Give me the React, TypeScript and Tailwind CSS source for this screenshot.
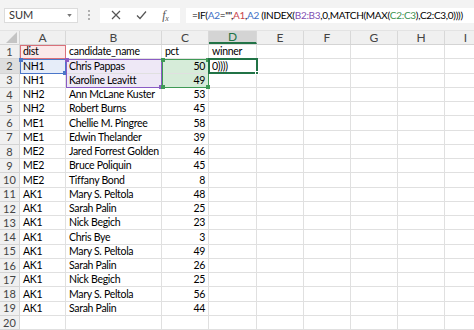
import React from "react";

const COLS = [
  { key: "A", w: "w-[46px]" },
  { key: "B", w: "w-[96px]" },
  { key: "C", w: "w-[47px]" },
  { key: "D", w: "w-[48px]" },
  { key: "E", w: "w-[47px]" },
  { key: "F", w: "w-[47px]" },
  { key: "G", w: "w-[47px]" },
  { key: "H", w: "w-[47px]" },
  { key: "I", w: "w-[42px]" },
];

const ROWS: [string, string, string, string][] = [
  ["dist", "candidate_name", "pct", "winner"],
  ["NH1", "Chris Pappas", "50", "0))))"],
  ["NH1", "Karoline Leavitt", "49", ""],
  ["NH2", "Ann McLane Kuster", "53", ""],
  ["NH2", "Robert Burns", "45", ""],
  ["ME1", "Chellie M. Pingree", "58", ""],
  ["ME1", "Edwin Thelander", "39", ""],
  ["ME2", "Jared Forrest Golden", "46", ""],
  ["ME2", "Bruce Poliquin", "45", ""],
  ["ME2", "Tiffany Bond", "8", ""],
  ["AK1", "Mary S. Peltola", "48", ""],
  ["AK1", "Sarah Palin", "25", ""],
  ["AK1", "Nick Begich", "23", ""],
  ["AK1", "Chris Bye", "3", ""],
  ["AK1", "Mary S. Peltola", "49", ""],
  ["AK1", "Sarah Palin", "26", ""],
  ["AK1", "Nick Begich", "25", ""],
  ["AK1", "Mary S. Peltola", "56", ""],
  ["AK1", "Sarah Palin", "44", ""],
  ["", "", "", ""],
];

// light fills for the cells referenced by the formula being edited
function cellBg(row: number, col: string) {
  if (row === 1 && col === "A") return "bg-[#fbe9ea]";
  if (row === 2 && col === "A") return "bg-[#e6edf9]";
  if ((row === 2 || row === 3) && col === "B") return "bg-[#eee8f6]";
  if ((row === 2 || row === 3) && col === "C") return "bg-[#d6ecd9]";
  return "bg-white";
}

function Handle({ cls }: { cls: string }) {
  return <div className={`absolute w-[4px] h-[4px] ${cls}`} />;
}

export default function App() {
  return (
    <div className="w-[474px] h-[330px] overflow-hidden bg-[#e6e6e6] text-[10.5px] tracking-[-0.3px] text-black" style={{ fontFamily: "Lato, 'Liberation Sans', sans-serif" }}>
      {/* formula bar */}
      <div className="h-[31px] bg-[#f3f3f3] flex items-center pl-[4px] border-b border-[#e3e3e3]">
        <div className="w-[74px] shrink-0 h-[15px] bg-white border border-[#dcdcdc] flex items-center justify-between pl-[4px] pr-[5px] text-[11px] tracking-normal text-[#333]">
          <span>SUM</span>
          <svg width="5" height="3" viewBox="0 0 6 4"><path d="M0 0h6L3 4z" fill="#777" /></svg>
        </div>
        <div className="w-[22px] shrink-0 flex flex-col items-center gap-[2px]">
          <span className="w-[2px] h-[2px] bg-[#b0b0b0]" />
          <span className="w-[2px] h-[2px] bg-[#b0b0b0]" />
          <span className="w-[2px] h-[2px] bg-[#b0b0b0]" />
        </div>
        <div className="w-[80px] shrink-0 h-[15px] bg-white flex items-center justify-around px-[4px]">
          <svg width="10" height="10" viewBox="0 0 10 10"><path d="M1 1L9 9M9 1L1 9" stroke="#555" strokeWidth="1.2" /></svg>
          <svg width="11" height="10" viewBox="0 0 11 10"><path d="M1 5.5L4 8.5L10 1.5" stroke="#555" strokeWidth="1.2" fill="none" /></svg>
          <span className="italic text-[#555] text-[12px] leading-none" style={{ fontFamily: "'Liberation Serif', serif" }}>f<sub className="text-[8px]">x</sub></span>
        </div>
        <div className="ml-[6px] flex-1 min-w-0 h-[15px] bg-white flex items-center pl-[6px] text-[10px] tracking-[-0.3px] whitespace-nowrap overflow-hidden">
          <span>=IF(</span>
          <span className="text-[#3d6fc6]">A2</span>
          <span>="",</span>
          <span className="text-[#c9454b]">A1</span>
          <span>,</span>
          <span className="text-[#3d6fc6]">A2</span>
          <span>&nbsp;(INDEX(</span>
          <span className="text-[#7e4fb2]">B2:B3</span>
          <span>,0,MATCH(MAX(</span>
          <span className="text-[#3b9150]">C2:C3</span>
          <span>),C2:C3,0))))</span>
        </div>
      </div>

      {/* sheet */}
      <div className="relative">
        {/* column headers */}
        <div className="flex h-[14px] bg-[#f0f0f0] border-b border-[#d4d4d4]">
          <div className="w-[20px] shrink-0 border-r border-[#d4d4d4] flex items-end justify-end pr-[2px] pb-[1px]">
            <svg width="11" height="11" viewBox="0 0 11 11"><path d="M11 0V11H0z" fill="#c4c4c4" /></svg>
          </div>
          {COLS.map((c) => (
            <div
              key={c.key}
              className={`${c.w} shrink-0 border-r border-[#d8d8d8] flex items-center justify-center text-[12px] tracking-normal ${c.key === "D" ? "bg-[#d4d4d4] text-[#217346] border-b-2 border-b-[#217346]" : "text-[#444]"}`}
            >
              {c.key}
            </div>
          ))}
        </div>

        {/* rows */}
        {ROWS.map((r, i) => {
          const n = i + 1;
          return (
            <div key={n} className="flex h-[14.25px]">
              <div className={`w-[20px] shrink-0 border-r border-b border-[#d4d4d4] flex items-center justify-center pt-px text-[11px] tracking-normal text-[#444] ${n === 2 ? "bg-[#dedede]" : "bg-[#f0f0f0]"}`}>
                {n}
              </div>
              {COLS.map((c, ci) => {
                const val = ci < 4 ? r[ci] : "";
                return (
                  <div
                    key={c.key}
                    className={`${c.w} shrink-0 border-r border-b border-[#e0e0e0] flex items-center pt-px px-[3px] whitespace-nowrap overflow-hidden ${c.key === "C" && n > 1 ? "justify-end" : ""} ${cellBg(n, c.key)}`}
                  >
                    {val}
                  </div>
                );
              })}
            </div>
          );
        })}

        {/* reference outlines of the formula being edited */}
        <div className="absolute left-[20px] top-[14px] w-[46px] h-[14.25px] border border-[#d9707a]" />
        <div className="absolute left-[20px] top-[28.25px] w-[46px] h-[14.25px] border border-[#4a76c9]">
          <Handle cls="-left-[2px] -top-[2px] bg-[#4a76c9]" />
          <Handle cls="-right-[2px] -bottom-[2px] bg-[#4a76c9]" />
        </div>
        <div className="absolute left-[66px] top-[28.25px] w-[96px] h-[28.5px] border border-[#8a5cc4]">
          <Handle cls="-left-[2px] -top-[2px] bg-[#8a5cc4]" />
          <Handle cls="-right-[2px] -bottom-[2px] bg-[#8a5cc4]" />
        </div>
        <div className="absolute left-[162px] top-[28.25px] w-[47px] h-[28.5px] border border-[#3f9a56]">
          <Handle cls="-left-[2px] -top-[2px] bg-[#3f9a56]" />
          <Handle cls="-right-[2px] -top-[2px] bg-[#3f9a56]" />
          <Handle cls="-left-[2px] -bottom-[2px] bg-[#3f9a56]" />
          <Handle cls="-right-[2px] -bottom-[2px] bg-[#3f9a56]" />
        </div>
        {/* active cell */}
        <div className="absolute left-[208px] top-[27.25px] w-[50px] h-[16px] border-2 border-[#217346]">
          <div className="absolute -right-[3px] -bottom-[3px] w-[4px] h-[4px] bg-[#217346] border border-white" />
        </div>
      </div>
    </div>
  );
}
